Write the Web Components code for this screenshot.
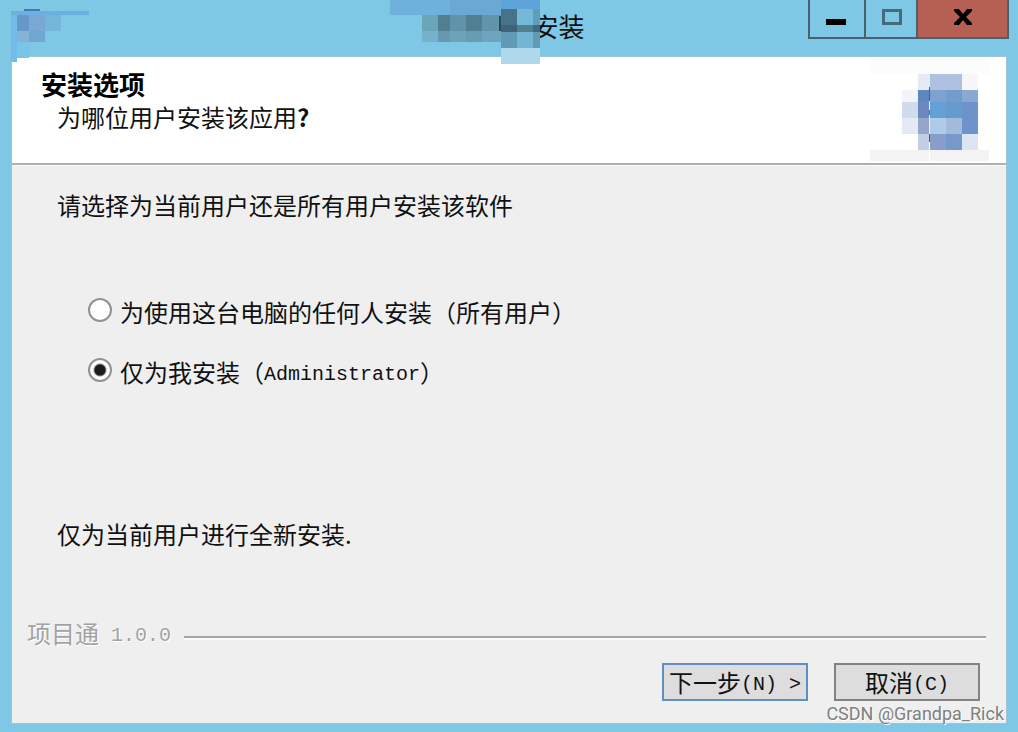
<!DOCTYPE html>
<html lang="zh-CN">
<head>
<meta charset="utf-8">
<title>安装</title>
<style>
html, body { margin: 0; min-height: 100%; }
body { background: #7fc8e5; color: #111; font: 24px/28px "Noto Sans CJK SC", sans-serif; }
</style>
</head>
<body>
<setup-window>
  <window-titlebar slot="title">安装</window-titlebar>
  <wizard-header slot="header"><span slot="title">安装选项</span>为哪位用户安装该应用<b>?</b></wizard-header>
  <install-options slot="content"></install-options>
  <wizard-footer slot="footer"></wizard-footer>
</setup-window>
<script>
const define = (name, html) => customElements.define(name, class extends HTMLElement {
  constructor() {
    super();
    this.attachShadow({ mode: 'open' }).innerHTML = html;
  }
});
const blocks = list => list.map(([x, y, w, h, c]) => `<rect x="${x}" y="${y}" width="${w}" height="${h}" fill="${c}"/>`).join('');
const mono = `.m { font: 20px "Liberation Mono", monospace; line-height: 0; vertical-align: 2px; white-space: pre; }`;

define('setup-window', `<style>
:host { display: flex; flex-direction: column; min-height: 100vh; box-sizing: border-box; padding: 0 12px 9px; position: relative; }
main { flex: 1; display: flex; flex-direction: column; background: #efefef; box-shadow: 0 0 0 1px #9fc4da; }
.content { flex: 1; }
.mark { position: absolute; right: 14px; bottom: 6px; font: 18px/24px Roboto, sans-serif; color: #808080; text-shadow: 1px 1px 0 #fff; }
</style>
<slot name="title"></slot>
<main><slot name="header"></slot><div class="content"><slot name="content"></slot></div><slot name="footer"></slot></main>
<div class="mark">CSDN @Grandpa_Rick</div>`);

define('window-titlebar', `<style>
:host { display: grid; grid-template-columns: 1fr auto 1fr; height: 57px; margin: 0 -3px 0 -12px; }
.icon { width: 90px; height: 64px; position: relative; }
.caption { position: relative; font-size: 26px; line-height: 52px; padding: 0 34px 0 142px; z-index: 1; }
.caption svg { position: absolute; left: 0; top: 0; }
window-controls { justify-self: end; }
svg { display: block; }
</style>
<svg class="icon" viewBox="0 0 90 64" aria-hidden="true">${blocks([
  [24,9,16,3,'#4377bb'],[11,11,78,4,'#6db0de'],[11,15,6,47,'#72bde8'],[17,15,12,16,'#6898cb'],[29,15,16,16,'#78a8d6'],
  [45,15,16,16,'#74b6da'],[17,31,12,11,'#84b3d6'],[29,31,16,11,'#70a7d1'],[17,42,12,16,'#78c5e8']])}</svg>
<div class="caption"><slot></slot><svg width="151" height="64" aria-hidden="true">${blocks([
  [0,0,111,15,'#6db1dc'],[60,0,51,15,'#69a9d4'],[111,0,39,9,'#5fa4d9'],
  [32,15,16,16,'#6aa5ba'],[48,15,12,16,'#507f93'],[60,15,16,16,'#5f94aa'],[76,15,16,16,'#507f93'],[92,15,19,16,'#6295a9'],
  [32,31,16,11,'#74b3cb'],[48,31,12,11,'#659ab0'],[60,31,16,11,'#6ba3b9'],[76,31,16,11,'#679cb3'],[92,31,19,11,'#6ca5bd'],
  [109,16,2,15,'#284c62'],
  [111,9,16,16,'#47738a'],[127,9,16,16,'#74b9d7'],[143,9,7,16,'#5f9db8'],
  [111,25,16,7,'#3f6479'],[127,25,16,7,'#517f94'],[143,25,7,7,'#416a80'],
  [111,32,16,16,'#619ab5'],[127,32,16,16,'#73b6d4'],[143,32,7,16,'#629ab6'],[111,48,39,16,'#b0d8eb']])}</svg></div>
<window-controls></window-controls>`);

define('window-controls', `<style>
:host { display: flex; height: 39px; box-sizing: border-box; border: 2px solid #4b626e; border-top: 0; }
button { box-sizing: border-box; border: 0; border-right: 2px solid #4b626e; padding: 0; margin: 0; background: none; width: 56px; display: block; }
button:nth-child(3) { width: 52px; }
button:last-child { border: 0; width: 89px; background: #b56052; }
svg { display: block; margin: auto; }
</style>
<button aria-label="最小化"><svg width="54" height="37"><path d="M16 19h20v6H16z"/></svg></button>
<button aria-label="最大化"><svg width="50" height="37"><path d="M17.500 10.500h17v13h-17z" fill="none" stroke="#466b7d" stroke-width="3"/></svg></button>
<button aria-label="关闭"><svg width="89" height="37"><path d="M36 9h5l4 5 4-5h5v2l-6 6 6 6v2h-5l-4-5-4 5h-5v-2l6-6-6-6z"/></svg></button>`);

define('wizard-header', `<style>
:host { display: flex; justify-content: space-between; height: 106px; background: #fff; border-bottom: 2px solid #b0b0b0; box-shadow: 0 1px #fbfbfb; }
h1 { font-size: 26px; line-height: 32px; margin: 0; font-weight: 700; color: #000; }
p { margin: 0; padding: 3px 0 0 16px; }
.text { padding: 11px 0 0 29px; }
svg { margin: 1px 17px 0 0; display: block; }
</style>
<div class="text"><h1><slot name="title"></slot></h1><p><slot></slot></p></div>
<svg width="119" height="103" viewBox="870 58 119 103" role="img" aria-label="logo">${blocks([
  [870,58,119,16,'#fbfdfd'],[870,150,119,11,'#f3f3f3'],
  [918,74,12,16,'#e5ebf5'],[930,74,32,16,'#afc1e1'],[962,74,16,16,'#f6f6fb'],
  [902,90,16,12,'#f1f5fa'],[918,90,12,12,'#6086c0'],[930,90,16,12,'#7ea2cf'],[946,90,16,12,'#719dcc'],[962,90,16,12,'#8ba8d3'],
  [902,102,16,16,'#d0dcee'],[918,102,12,16,'#6c88bd'],[930,102,16,16,'#63a0d7'],[946,102,16,16,'#669bd0'],[962,102,16,32,'#6d93ca'],
  [902,118,16,16,'#e4eaf5'],[918,118,12,16,'#96a6ca'],[930,118,16,16,'#aecbe8'],[946,118,16,16,'#a2bbdc'],
  [918,134,12,16,'#c5cde2'],[930,134,16,16,'#879dca'],[946,134,16,16,'#7798cb'],[962,134,16,16,'#dce6f3'],
  [929,87,1,14,'#3565a9'],[929,101,1,33,'#e8eef7'],[929,110,1,5,'#5275ae'],[929,134,1,8,'#3c5f9f'],[929,142,1,19,'#fff']])}</svg>`);

define('install-options', `<style>
:host { display: block; padding: 26px 45px 0; }
p { margin: 0; }
fieldset { border: 0; margin: 79px 0 0; padding: 0 0 0 31px; display: grid; gap: 32px; }
.summary { margin-top: 134px; }
${mono}
</style>
<p id="q">请选择为当前用户还是所有用户安装该软件</p>
<fieldset role="radiogroup" aria-labelledby="q">
<radio-option>为使用这台电脑的任何人安装（所有用户）</radio-option>
<radio-option checked>仅为我安装（<span class="m">Administrator</span>）</radio-option>
</fieldset>
<p class="summary">仅为当前用户进行全新安装.</p>`);

customElements.define('radio-option', class extends HTMLElement {
  connectedCallback() {
    if (this.shadowRoot) return;
    this.attachShadow({ mode: 'open' }).innerHTML = `<style>
:host { display: block; }
label { display: flex; align-items: flex-start; gap: 8px; height: 28px; }
input { appearance: none; flex: none; width: 24px; height: 24px; margin: 0; border: 2px solid #929292; border-radius: 50%; background: #fff; }
input:checked { background: radial-gradient(circle, #1c1c1c 5px, #fff 7px); }
</style><label><input type="radio"${this.hasAttribute('checked') ? ' checked' : ''}><span><slot></slot></span></label>`;
    const input = this.shadowRoot.querySelector('input');
    input.addEventListener('change', () => {
      for (const o of this.parentElement.querySelectorAll('radio-option'))
        if (o !== this) o.shadowRoot.querySelector('input').checked = false;
    });
  }
});

define('push-button', `<style>
:host { display: block; }
button { display: block; box-sizing: border-box; width: 146px; height: 38px; padding: 0; border: 2px solid var(--edge, #828282); background: #dddddd; color: #111; font: inherit; line-height: 32px; white-space: nowrap; }
</style><button><slot></slot></button>`);

define('wizard-footer', `<style>
:host { display: block; padding: 0 20px 22px 15px; }
.brand { display: flex; align-items: center; gap: 13px; color: #a3a3a3; text-shadow: 1px 1px #fff; }
hr { flex: 1; height: 2px; border: 0; margin: 8px 0 0; background: #a6a6a6; box-shadow: 0 2px #fafafa; }
.actions { display: flex; justify-content: flex-end; gap: 26px; padding: 16px 6px 0 0; }
.next { --edge: #5e8fc0; }
${mono}
</style>
<div class="brand"><span>项目通<span class="m"> 1.0.0</span></span><hr></div>
<div class="actions"><push-button class="next">下一步<span class="m">(N) &gt;</span></push-button><push-button>取消<span class="m">(C)</span></push-button></div>`);
</script>
</body>
</html>
